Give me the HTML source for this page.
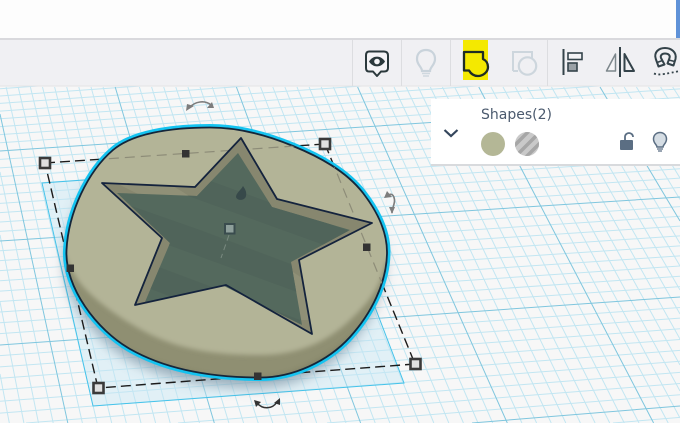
<!DOCTYPE html>
<html><head><meta charset="utf-8">
<style>
html,body{margin:0;padding:0;width:680px;height:423px;overflow:hidden;background:#f7f7f7}
svg{position:absolute;left:0;top:0}
.t{font-family:"DejaVu Sans","Liberation Sans",sans-serif}
</style></head>
<body>
<svg width="680" height="423" viewBox="0 0 680 423" xmlns="http://www.w3.org/2000/svg">
<defs>
<path id="o" d="M66.500,250C68.400,212 88,171.400 113,150C132,133.700 170,127.500 210,127.500C238.300,127.500 267,135.200 293,146C318.800,156.600 345.900,170.900 363,193C375.900,209.700 387,230.800 387,252C387,283 370.800,314.100 350,337C327.900,361.400 293,377.500 260,377.500C215.500,377.500 168.700,371 130,349C97,330 64.600,288 66.500,250Z"/>
<clipPath id="oc"><use href="#o"/></clipPath>
<clipPath id="fl"><polygon points="238,153 272,207 350,230 291,262 302,325 224,286 145,302 170,243 117,193 197,196"/></clipPath>
<clipPath id="st"><polygon points="241,138 277,199 372,223 299,260 312,334 226,285 135,305 162,238 102,183 195,187"/></clipPath>
<clipPath id="hc"><circle cx="527" cy="144" r="12"/></clipPath>
<filter id="b6" x="-20%" y="-20%" width="140%" height="140%"><feGaussianBlur stdDeviation="6"/></filter>
<filter id="b2" x="-20%" y="-20%" width="140%" height="140%"><feGaussianBlur stdDeviation="2.500"/></filter>
</defs>

<path fill="none" stroke="#c2e6f2" stroke-width="1" d="M0,374L9.300,423M0,302L23.900,423M0,235L38.500,423M0,172L53.200,423M6.100,87L82.400,423M18.200,87L97.100,423M30.400,87L111.700,423M42.500,87L126.300,423M54.600,87L141,423M66.700,87L155.600,423M78.800,87L170.200,423M91,87L184.800,423M103.100,87L199.500,423M127.300,87L228.900,423M139.400,87L243.600,423M151.600,87L258.200,423M163.700,87L272.800,423M175.800,87L287.500,423M187.900,87L302.100,423M200,87L316.700,423M212.200,87L331.300,423M224.300,87L346,423M248.500,87L375.200,423M260.600,87L389.900,423M272.800,87L404.500,423M284.900,87L419.100,423M297,87L433.800,423M309.100,87L448.800,423M321.200,87L463.400,423M333.400,87L478,423M345.500,87L492.700,423M369.700,87L521.900,423M381.800,87L536.600,423M394,87L551.200,423M406.100,87L565.800,423M418.200,87L580.400,423M430.300,87L595.100,423M442.400,87L609.700,423M454.600,87L624.300,423M466.700,87L639,423M490.900,87L668.200,423M503,87L680,418M515.200,87L680,391M527.300,87L680,365M539.400,87L680,339M551.500,87L680,314M563.600,87L680,290M575.800,87L680,266M587.900,87L680,243.500M612.100,87L680,199.500M624.200,87L680,178M636.400,87L680,157.500M648.500,87L680,137M660.600,87L680,117.600M672.700,87L680,98.400"/>
<path fill="none" stroke="#c2e6f2" stroke-width="1" d="M0,88.700L680,39.700M0,96L680,47.600M0,103.400L680,55.700M0,111.100L680,63.900M0,118.800L680,72.100M0,126.600L680,80.500M0,134.600L680,88.900M0,142.800L680,97.400M0,159.400L680,114.700M0,167.900L680,123.500M0,176.600L680,132.400M0,185.400L680,141.300M0,194.300L680,150.400M0,203.400L680,159.500M0,212.600L680,168.800M0,222L680,178.100M0,231.400L680,187.500M0,250.800L680,206.600M0,260.600L680,216.300M0,270.600L680,226.100M0,280.800L680,235.900M0,291.100L680,245.900M0,301.500L680,255.900M0,312L680,266M0,322.800L680,276.300M0,333.600L680,286.600M0,355.600L680,307.500M0,366.900L680,318.100M0,378.200L680,328.800M0,389.700L680,339.500M0,401.300L680,350.400M0,413.100L680,361.300M26,423L680,372.400M178,423L680,383.500M327,423L680,394.700M613,423L680,417.400"/>
<path fill="none" stroke="#7fc6de" stroke-width="1" d="M0,114L67.800,423M115.200,87L214.300,423M236.400,87L360.600,423M357.600,87L507.300,423M478.800,87L653.600,423M600,87L680,221M0,151L680,106M0,241L680,197M0,345L680,297M472,423L680,406"/>

<polygon points="42,183 320,163 404,383 93,406" fill="#c5e6f4" fill-opacity=".45" stroke="#45c3ea" stroke-width="1"/>
<use href="#o" transform="translate(-2,10)" fill="#5b7488" fill-opacity=".55" filter="url(#b6)"/>

<g fill="none" stroke="#1b1b1b" stroke-width="1.400" stroke-dasharray="10 5">
<path d="M45,163L325,144"/><path d="M325,144L415,364"/><path d="M415,364L98,388"/><path d="M98,388L45,163"/>
</g>

<use href="#o" fill="none" stroke="#15c3f0" stroke-width="7"/>
<use href="#o" fill="#8f8f72"/>
<g clip-path="url(#oc)">
<path d="M60,120H395V262H386C380,290 366,305 350,320C325,344 295,355 260,355C225,355 193,352 163,340C130,327 90,298 78,280C70,268 66,258 60,240Z" fill="#b3b497" filter="url(#b2)"/>
<path d="M58,295C80,345 170,388 260,385C320,380 372,340 394,285" fill="none" stroke="#75745a" stroke-width="14" opacity=".6" filter="url(#b2)"/>
</g>
<use href="#o" fill="none" stroke="#15263a" stroke-width="1.800"/>

<g fill="none" stroke="#8d8c78" stroke-width="1.200" stroke-dasharray="10 6" clip-path="url(#oc)">
<path d="M45,163L325,144"/><path d="M325,144L415,364"/>
</g>

<polygon points="241,138 277,199 372,223 299,260 312,334 226,285 135,305 162,238 102,183 195,187" fill="#87876f"/>
<g clip-path="url(#st)" fill="#94947b" opacity=".7">
<polygon points="100,175 160,178 220,215 200,225"/>
<polygon points="290,270 305,280 315,320 295,320"/>
</g>
<polygon points="238,153 272,207 350,230 291,262 302,325 224,286 145,302 170,243 117,193 197,196" fill="#54695d"/>
<g clip-path="url(#fl)" fill="#50645a">
<polygon points="100,195 200,230 360,290 360,315 100,220"/>
<polygon points="100,245 300,320 300,345 100,270"/>
<polygon points="180,170 360,235 360,258 180,193"/>
</g>
<polygon points="241,138 277,199 372,223 299,260 312,334 226,285 135,305 162,238 102,183 195,187" fill="none" stroke="#14233d" stroke-width="1.800" stroke-linejoin="round"/>

<path d="M243,186C241,190 236,193 236,197C237,201 245,201 246,196C247,192 245,189 243,186Z" fill="#37494a"/>
<path d="M229,235L221,258" stroke="#7a8a80" stroke-width="1" stroke-dasharray="6 4" fill="none"/>
<rect x="225" y="224" width="9.500" height="9.500" fill="#8e9f9b" stroke="#3a4c4e" stroke-width="2"/>

<g fill="#e0e0e0" stroke="#3a3a3a" stroke-width="2.600">
<rect x="40" y="158" width="10" height="10"/>
<rect x="320" y="139" width="10" height="10"/>
<rect x="410.500" y="359" width="10" height="10"/>
<rect x="93.500" y="383" width="10" height="10"/>
</g>
<g fill="#333">
<rect x="182" y="150" width="7.500" height="7.500"/>
<rect x="363" y="243.500" width="7.500" height="7.500"/>
<rect x="254" y="372.500" width="7.500" height="7.500"/>
<rect x="66.500" y="264.500" width="7.500" height="7.500"/>
</g>

<g fill="none" stroke="#7d7d7d" stroke-width="1.600">
<path d="M189,108C195,101 205,100 211,105"/>
<path d="M387,197C392,190 396,198 394,204C393,208 392,210 392,213"/>
</g>
<g fill="#7d7d7d">
<polygon points="186,111 187,104 194,106"/>
<polygon points="214,108 207,108 212,102"/>
<polygon points="384,198 392,197 387,191"/>
<polygon points="392,214 389,207 395,207"/>
</g>
<path d="M257,403C262,409 272,410 277,402" fill="none" stroke="#333" stroke-width="1.500"/>
<g fill="#333">
<polygon points="254,400 261,402 256,407"/>
<polygon points="280,398 280,405 274,403"/>
</g>

<rect x="0" y="0" width="680" height="38" fill="#fdfdfd"/>
<rect x="676" y="0" width="4" height="38" fill="#5f92d8"/>
<rect x="0" y="38" width="680" height="2" fill="#d9d9dd"/>
<rect x="0" y="40" width="680" height="46" fill="#f0f0f3"/>
<rect x="0" y="85.500" width="680" height="1" fill="#e3e3e6"/>
<g fill="#dcdde0">
<rect x="352" y="40" width="1" height="46"/><rect x="401" y="40" width="1" height="46"/>
<rect x="450" y="40" width="1" height="46"/><rect x="547" y="40" width="1" height="46"/>
</g>

<path d="M369,51.500H384Q388,51.500 388,55.500V68Q388,71.500 384,71.500H381L377,76L373,71.500H369Q366,71.500 366,68V55.500Q366,51.500 369,51.500Z" fill="#f4f4f6" stroke="#2b393c" stroke-width="2" stroke-linejoin="round"/>
<path d="M369,61.500C373,55 381,55 385,61.500C381,68 373,68 369,61.500Z" fill="#2b393c"/>
<circle cx="377" cy="61.500" r="2.800" fill="#f4f4f6"/>

<path d="M422,71C422,67 417,65 417,59C417,53 421,50 426,50C431,50 435,53 435,59C435,65 430,67 430,71Z" fill="none" stroke="#c9d3db" stroke-width="2.200"/>
<path d="M422,73.500H430M423,76H429" stroke="#cfd8df" stroke-width="1.600"/>

<rect x="463" y="40" width="25" height="40" fill="#f4e900"/>
<path d="M464,52H483V59C487,61 488,64 488,67C488,72 483,76 478,76C474,76 471,74 469,70.500H464Z" fill="none" stroke="#1e2c24" stroke-width="2.300" stroke-linejoin="round"/>

<path d="M513,71V52H532V58" fill="none" stroke="#cdd6dd" stroke-width="2"/>
<path d="M513,71H518" stroke="#cdd6dd" stroke-width="2"/>
<circle cx="527.500" cy="66" r="8.700" fill="#f0f0f3" stroke="#cdd6dd" stroke-width="2.200"/>

<rect x="562.500" y="49" width="2" height="26" fill="#34434a"/>
<rect x="568" y="53" width="14" height="6.500" fill="#f4f4f6" stroke="#34434a" stroke-width="1.600"/>
<rect x="568" y="63" width="9" height="8" fill="#9aa1a6" stroke="#34434a" stroke-width="1.600"/>

<rect x="619" y="47" width="2" height="30" fill="#34434a"/>
<path d="M615.500,54V71H606.500Z" fill="#f4f4f6" stroke="#7d878c" stroke-width="1.500" stroke-linejoin="round"/>
<path d="M624.500,54V71H634Z" fill="none" stroke="#34434a" stroke-width="2" stroke-linejoin="round"/>

<path d="M658.500,66.500L655.800,59C653.500,52 659,48 665,48C671,48 677,52 675.500,59L673.500,65.500L667.500,63.500L669.500,58C670.500,55 668,53.500 665,53.500C662,53.500 660,55.500 661,58L664.500,64.500Z" fill="none" stroke="#34434a" stroke-width="2" stroke-linejoin="round"/>
<path d="M657,62.500L662.500,60.500M674.800,61.500L668.700,60" fill="none" stroke="#34434a" stroke-width="1.500"/>
<path d="M654,73.500C660,76 668,73 680,71" fill="none" stroke="#34434a" stroke-width="1.800" stroke-dasharray="2 2.500"/>

<rect x="431" y="99" width="249" height="65" fill="#fff"/>
<rect x="431" y="164" width="249" height="2" fill="#d8dadd"/>
<path d="M444.500,130L451,136L457.500,130" fill="none" stroke="#34465c" stroke-width="2.200"/>
<text class="t" x="481" y="119" font-size="14" fill="#4b5a6e">Shapes(2)</text>
<circle cx="493" cy="144" r="12" fill="#b4b796"/>
<circle cx="527" cy="144" r="12" fill="#c9c9c9"/>
<g clip-path="url(#hc)" stroke="#a6a6a6" stroke-width="3.500">
<path d="M510,150L530,130M516,156L538,134M523,160L545,138M532,162L548,146"/>
</g>
<rect x="620" y="140" width="13" height="10" rx="1" fill="#5b6e83"/>
<path d="M625,140V137C625,134.500 627,133 629,133C631,133 633,134.500 633,137" fill="none" stroke="#5b6e83" stroke-width="1.800"/>
<path d="M657,147C657,144.500 653.500,143.500 653.500,139C653.500,135 656.500,132.500 660,132.500C663.500,132.500 666.500,135 666.500,139C666.500,143.500 663,144.500 663,147Z" fill="#d5dde4" stroke="#5b6e83" stroke-width="1.500"/>
<path d="M657,149H663M658,151H662" stroke="#5b6e83" stroke-width="1.200"/>
</svg>
</body></html>
